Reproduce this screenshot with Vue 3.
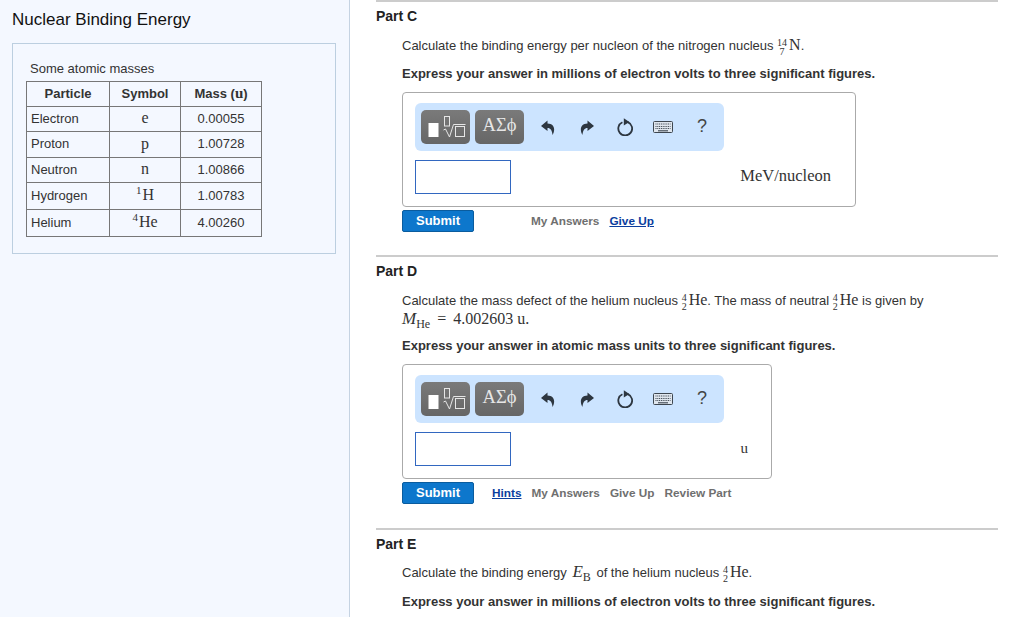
<script setup>
const rows = [
  { name: 'Electron', sym: 'e', sup: '', mass: '0.00055', cls: 'r25' },
  { name: 'Proton', sym: 'p', sup: '', mass: '1.00728', cls: 'r26' },
  { name: 'Neutron', sym: 'n', sup: '', mass: '1.00866', cls: 'r25' },
  { name: 'Hydrogen', sym: 'H', sup: '1', mass: '1.00783', cls: 'r27' },
  { name: 'Helium', sym: 'He', sup: '4', mass: '4.00260', cls: 'r27' }
]
</script>

<template>
  <div class="page">
    <svg class="defs" width="0" height="0" aria-hidden="true">
      <symbol id="undo" viewBox="0 0 14 15">
        <path d="M6.5 0.5 L0 6 L6.5 11 V8 C9.6 8 11 10.6 11.6 15 C14.6 9.5 13.4 3.6 6.5 3.4 Z" fill="currentColor" />
      </symbol>
      <symbol id="redo" viewBox="0 0 14 15">
        <path d="M7.5 0.5 L14 6 L7.5 11 V8 C4.4 8 3 10.6 2.4 15 C-0.6 9.5 0.6 3.6 7.5 3.4 Z" fill="currentColor" />
      </symbol>
      <symbol id="reset" viewBox="0 0 16 18">
        <path d="M5.4 4.2 A6.9 6.9 0 1 0 10.8 4.1" fill="none" stroke="currentColor" stroke-width="1.8" />
        <path d="M6.8 0.2 L12.4 3.9 L6.8 7.4 Z" fill="currentColor" />
      </symbol>
      <symbol id="keys" viewBox="0 0 20 12">
        <rect x="0.5" y="0.5" width="19" height="11" rx="1" fill="#dfe6ee" stroke="#3d4650" />
        <path d="M2.5 3h15M2.5 5.5h15M2.5 7.5h15" stroke="#3d4650" stroke-width="1.1" stroke-dasharray="1 .8" />
        <path d="M5 9.8h10" stroke="#3d4650" stroke-width="1.1" />
      </symbol>
      <symbol id="templ" viewBox="0 0 46 30">
        <rect x="5.5" y="11" width="10" height="14" fill="#fff" />
        <rect x="21.5" y="4.5" width="5" height="9.5" fill="none" stroke="#e6e6e6" />
        <path d="M20.5 18 L22.5 17 L26.5 25 L30.5 12.5 H42.5" fill="none" stroke="#e6e6e6" stroke-width="1" />
        <rect x="32.5" y="14.5" width="9" height="10" fill="none" stroke="#e6e6e6" />
      </symbol>
    </svg>

    <aside class="side">
      <h1 class="title">Nuclear Binding Energy</h1>
      <div class="panel">
        <div class="caption">Some atomic masses</div>
        <table class="masses">
          <thead>
            <tr class="r25">
              <th class="c1">Particle</th>
              <th class="c2">Symbol</th>
              <th class="c3">Mass (<span class="math">u</span>)</th>
            </tr>
          </thead>
          <tbody>
            <tr v-for="row in rows" :key="row.name" :class="row.cls">
              <td class="c1 name">{{ row.name }}</td>
              <td class="c2 math sym"><sup v-if="row.sup" class="tsup">{{ row.sup }}</sup>{{ row.sym }}</td>
              <td class="c3 num">{{ row.mass }}</td>
            </tr>
          </tbody>
        </table>
      </div>
    </aside>

    <main class="main">
      <section class="part part-c">
        <h2 class="head">Part C</h2>
        <div class="body">
          <p class="q q1">Calculate the binding energy per nucleon of the nitrogen nucleus
            <span class="st"><i>14</i><i>7</i></span><span class="math el">N</span>.</p>
          <p class="ex ex1">Express your answer in millions of electron volts to three significant figures.</p>
          <div class="box wide">
            <div class="toolbar">
              <span class="tbtn"><svg width="46" height="30"><use href="#templ" /></svg></span>
              <span class="tbtn greek">ΑΣϕ</span>
              <span class="tools">
                <svg class="t-undo" width="14" height="15"><use href="#undo" /></svg>
                <svg class="t-redo" width="14" height="15"><use href="#redo" /></svg>
                <svg class="t-reset" width="16" height="18"><use href="#reset" /></svg>
                <svg class="t-keys" width="20" height="12"><use href="#keys" /></svg>
                <span class="t-help">?</span>
              </span>
            </div>
            <div class="entry">
              <span class="input"></span>
              <span class="unit math">MeV/nucleon</span>
            </div>
          </div>
          <div class="actions">
            <span class="submit">Submit</span>
            <span class="links first-c"><span class="muted">My Answers</span><a class="link">Give Up</a></span>
          </div>
        </div>
      </section>

      <section class="part part-d">
        <h2 class="head">Part D</h2>
        <div class="body">
          <p class="q q2">Calculate the mass defect of the helium nucleus
            <span class="st"><i>4</i><i>2</i></span><span class="math el">He</span>. The mass of neutral
            <span class="st"><i>4</i><i>2</i></span><span class="math el">He</span> is given by<br />
            <span class="math eq"><em>M</em><sub class="msub">He</sub> <span class="eqs">=</span> 4.002603 u.</span></p>
          <p class="ex ex2">Express your answer in atomic mass units to three significant figures.</p>
          <div class="box narrow">
            <div class="toolbar">
              <span class="tbtn"><svg width="46" height="30"><use href="#templ" /></svg></span>
              <span class="tbtn greek">ΑΣϕ</span>
              <span class="tools">
                <svg class="t-undo" width="14" height="15"><use href="#undo" /></svg>
                <svg class="t-redo" width="14" height="15"><use href="#redo" /></svg>
                <svg class="t-reset" width="16" height="18"><use href="#reset" /></svg>
                <svg class="t-keys" width="20" height="12"><use href="#keys" /></svg>
                <span class="t-help">?</span>
              </span>
            </div>
            <div class="entry">
              <span class="input"></span>
              <span class="unit unit-u math">u</span>
            </div>
          </div>
          <div class="actions">
            <span class="submit">Submit</span>
            <span class="links first-d"><a class="link">Hints</a><span class="muted">My Answers</span><span class="muted">Give Up</span><span class="muted">Review Part</span></span>
          </div>
        </div>
      </section>

      <section class="part part-e">
        <h2 class="head">Part E</h2>
        <div class="body">
          <p class="q q3">Calculate the binding energy
            <span class="math eb"><em>E</em><sub class="msub">B</sub></span> of the helium nucleus
            <span class="st"><i>4</i><i>2</i></span><span class="math el">He</span>.</p>
          <p class="ex ex3">Express your answer in millions of electron volts to three significant figures.</p>
        </div>
      </section>
    </main>
  </div>
</template>

<style>
html, body { margin: 0; padding: 0; background: #fff; }
</style>

<style scoped>
.page {
  display: flex;
  width: 1022px;
  height: 617px;
  overflow: hidden;
  font-family: "Liberation Sans", Arial, sans-serif;
  font-size: 13px;
  color: #333;
  background: #fff;
}
.defs { position: absolute; }
.math { font-family: "Liberation Serif", "Times New Roman", serif; }

.side {
  width: 349px;
  height: 617px;
  flex: none;
  background: #f4f8ff;
  border-right: 1px solid #c5d3e2;
}
.title {
  margin: 0;
  padding: 10px 0 0 12px;
  height: 33px;
  box-sizing: border-box;
  font-size: 17px;
  line-height: 19px;
  font-weight: 400;
  color: #111;
}
.panel {
  margin: 10px 0 0 12px;
  width: 324px;
  height: 211px;
  box-sizing: border-box;
  border: 1px solid #bccfe0;
  padding: 16px 0 0 13px;
}
.caption {
  margin-left: 4px;
  height: 21px;
  line-height: 17px;
  font-size: 13px;
}
.masses {
  border-collapse: collapse;
  border: 1px solid #222;
  table-layout: fixed;
  width: 236px;
  font-size: 13px;
}
.masses th, .masses td { border: 1px solid #777; padding: 0 0 2px; text-align: center; }
.masses th { font-weight: 700; }
.r25 { height: 25px; }
.r26 { height: 26px; }
.r27 { height: 27px; }
.c1 { width: 82px; }
.c2 { width: 70px; }
.c3 { width: 80px; }
.masses td.name { text-align: left; padding-left: 4px; }
.sym { font-size: 16px; }
.tsup { font-size: 11px; line-height: 0; margin-right: 1px; }
.masses th .math { font-size: 15px; }

.main {
  width: 622px;
  margin-left: 26px;
  flex: none;
}
.part { border-top: 2px solid #ccc; box-sizing: border-box; }
.part-c { height: 255px; }
.part-d { height: 273px; }
.part-e { height: 89px; }
.head {
  margin: 0;
  padding-top: 6px;
  height: 27px;
  box-sizing: border-box;
  font-size: 14px;
  line-height: 17px;
  color: #222;
}
.body { padding-left: 26px; }
.q { margin: 0; line-height: 19px; }
.q1 { padding-top: 7px; }
.q2 { padding-top: 7px; }
.q3 { padding-top: 6px; }
.ex { margin: 0; font-weight: 700; line-height: 16px; }
.ex1 { padding-top: 11px; }
.ex2 { padding-top: 9px; }
.ex3 { padding-top: 12px; }

.st {
  display: inline-flex;
  flex-direction: column;
  align-items: center;
  vertical-align: 4px;
  margin: -4px 2px -8px 0;
  font-family: "Liberation Serif", serif;
  font-size: 10px;
  line-height: 9px;
}
.st i { font-style: normal; }
.el { font-size: 16px; line-height: 16px; }
.eq { font-size: 16px; line-height: 16px; }
.eq em, .eb em { font-style: italic; font-size: 17px; }
.eb { font-size: 16px; line-height: 16px; margin: 0 2px; }
.msub { font-size: 12px; line-height: 0; }
.eqs { margin: 0 3px; }

.box {
  box-sizing: border-box;
  height: 115px;
  border: 1px solid #aaa;
  border-radius: 4px;
  padding: 10px 12px 0;
}
.wide { width: 454px; margin-top: 10px; }
.narrow { width: 370px; margin-top: 10px; }
.toolbar {
  display: flex;
  align-items: center;
  width: 309px;
  height: 48px;
  box-sizing: border-box;
  background: #cce4ff;
  border-radius: 6px;
  padding-left: 6px;
  gap: 5px;
}
.tbtn {
  display: flex;
  align-items: center;
  justify-content: center;
  width: 49px;
  height: 34px;
  border-radius: 5px;
  background: linear-gradient(#7a7a7a, #666);
  color: #e6e6e6;
}
.greek { font-family: "Liberation Serif", serif; font-size: 18.5px; box-sizing: border-box; padding-bottom: 3px; }
.tools { display: flex; align-items: center; color: #2d3640; flex: 1; height: 100%; }
.t-undo { margin-left: 12px; }
.t-redo { margin-left: 25px; }
.t-reset { margin-left: 23px; }
.t-keys { margin-left: 20px; }
.t-help { margin-left: 24px; padding-bottom: 2px; font-size: 18px; color: #444; }

.entry {
  display: flex;
  align-items: center;
  justify-content: space-between;
  margin-top: 9px;
}
.input {
  width: 96px;
  height: 34px;
  box-sizing: border-box;
  border: 1px solid #3267c0;
  background: #fff;
}
.unit { font-size: 16.5px; margin-right: 12px; margin-bottom: 3px; color: #333; }
.unit-u { margin-right: 11px; margin-bottom: 2px; font-size: 15px; }

.actions {
  display: flex;
  align-items: center;
  margin-top: 3px;
  height: 22px;
}
.submit {
  box-sizing: border-box;
  width: 72px;
  height: 22px;
  line-height: 20px;
  text-align: center;
  background: #0d77cc;
  border: 1px solid #0a5c9e;
  border-radius: 2px;
  color: #fff;
  font-weight: 700;
  font-size: 13px;
}
.links { display: flex; gap: 10px; font-size: 11.8px; font-weight: 700; }
.first-c { margin-left: 57px; }
.first-d { margin-left: 18px; }
.muted { color: #6f6f6f; }
.link { color: #0b3e9e; text-decoration: underline; }
</style>
